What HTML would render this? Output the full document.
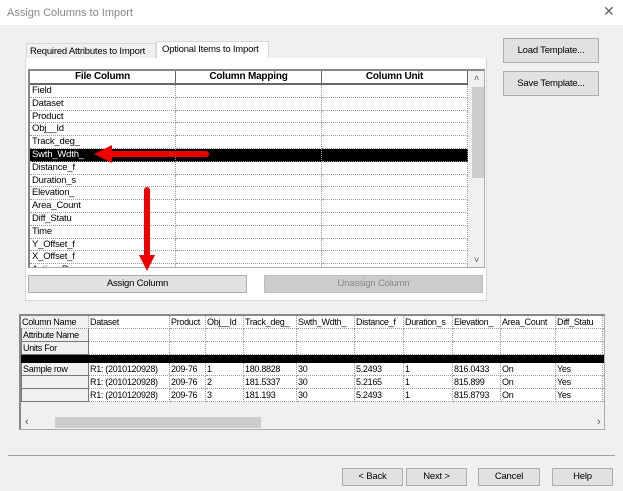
<!DOCTYPE html>
<html><head><meta charset="utf-8"><style>
*{box-sizing:border-box;margin:0;padding:0}
body{width:623px;height:491px;background:#f0f0f0;font-family:"Liberation Sans",Arial,sans-serif;font-size:9.5px;letter-spacing:-0.2px;color:#000;position:relative;overflow:hidden}
.a{position:absolute}
.btn{position:absolute;background:#e1e1e1;border:1px solid #adadad;text-align:center;font-size:9.5px}
.cell{position:absolute;border-right:1px dotted #999;border-bottom:1px dotted #999;white-space:nowrap;overflow:hidden;padding-left:2px;line-height:12px}
</style></head><body>
<div class="a" style="left:0;top:0;width:623px;height:25px;background:#fff"></div>
<div class="a" style="left:7px;top:7px;font-size:11px;color:#888;letter-spacing:0">Assign Columns to Import</div>
<div class="a" style="left:603px;top:3px;font-size:14px;color:#666">✕</div>

<div class="a" style="left:26px;top:43px;width:130px;height:15px;background:#f0f0f0;border:1px solid #d9d9d9;border-bottom:none;padding:2px 3px;white-space:nowrap">Required Attributes to Import</div>
<div class="a" style="left:156px;top:41px;width:113px;height:18px;background:#fff;border:1px solid #d9d9d9;border-bottom:none;padding:2px 5px;white-space:nowrap">Optional Items to Import</div>
<div class="a" style="left:25px;top:58px;width:462px;height:243px;background:#fff;border:1px solid #d9d9d9;border-top:none"></div>

<div class="a" style="left:28px;top:69px;width:457px;height:199px;background:#fff;border:1px solid #aaa;border-top:2px solid #888;border-left:2px solid #888;overflow:hidden">
 <div class="a" style="left:0;top:0;width:438px;height:14px;border-bottom:2px solid #666;font-weight:bold;font-size:10px">
  <div class="a" style="left:0;width:146px;text-align:center;border-right:1px solid #666;height:14px">File Column</div>
  <div class="a" style="left:146px;width:146px;text-align:center;border-right:1px solid #666;height:14px">Column Mapping</div>
  <div class="a" style="left:292px;width:146px;text-align:center;border-right:1px solid #666;height:14px">Column Unit</div>
 </div>
 <div id="rows"></div>
 <div class="a" style="left:438px;top:0;width:19px;height:199px;background:#f0f0f0"></div>
 <div class="a" style="left:444px;top:2px;font-size:9px;color:#555">˄</div>
 <div class="a" style="left:442px;top:16px;width:12px;height:91px;background:#cdcdcd"></div>
 <div class="a" style="left:444px;top:184px;font-size:9px;color:#555">˅</div>
</div>

<div class="btn" style="left:28px;top:275px;width:219px;height:18px;line-height:16px">Assign Column</div>
<div class="btn" style="left:264px;top:275px;width:219px;height:18px;line-height:16px;background:#ccc;border-color:#bfbfbf;color:#888">Unassign Column</div>
<div class="btn" style="left:503px;top:38px;width:96px;height:25px;line-height:23px">Load Template...</div>
<div class="btn" style="left:503px;top:71px;width:96px;height:25px;line-height:23px">Save Template...</div>

<svg class="a" style="left:0;top:0" width="623" height="491">
 <line x1="206" y1="154" x2="108" y2="154" stroke="#e00" stroke-width="6" stroke-linecap="round"/>
 <polygon points="94,154 112,145 112,163" fill="#e00"/>
 <line x1="147" y1="190" x2="147" y2="258" stroke="#e00" stroke-width="6" stroke-linecap="round"/>
 <polygon points="147,271 139,255 155,255" fill="#e00"/>
</svg>

<div class="a" style="left:19px;top:314px;width:586px;height:116px;background:#f0f0f0;border:1px solid #aaa;border-top:2px solid #888;border-left:2px solid #888;overflow:hidden" id="bg"></div>

<div class="a" style="left:8px;top:455px;width:607px;height:1px;background:#a0a0a0"></div>
<div class="btn" style="left:342px;top:468px;width:61px;height:18px;line-height:16px">&lt; Back</div>
<div class="btn" style="left:406px;top:468px;width:61px;height:18px;line-height:16px">Next &gt;</div>
<div class="btn" style="left:478px;top:468px;width:62px;height:18px;line-height:16px">Cancel</div>
<div class="btn" style="left:552px;top:468px;width:61px;height:18px;line-height:16px">Help</div>

<script>
var names=["Field","Dataset","Product","Obj__Id","Track_deg_","Swth_Wdth_","Distance_f","Duration_s","Elevation_","Area_Count","Diff_Statu","Time","Y_Offset_f","X_Offset_f","Active_Row"];
var h="";
names.forEach(function(n,i){var t=14+i*12.8,sel=i==5;
 h+='<div class="a" style="left:0;top:'+t+'px;width:438px;height:12.8px;'+(sel?'background:#000;color:#fff':'')+'">';
 h+='<div class="cell" style="left:0;width:146px;height:12.8px">'+n+'</div><div class="cell" style="left:146px;width:146px;height:12.8px"></div><div class="cell" style="left:292px;width:146px;height:12.8px"></div></div>';});
document.getElementById("rows").innerHTML=h;
var xs=[0,68,149,185,223,276,334,383,432,480,535,582,600];
var hd=["Column Name","Dataset","Product","Obj__Id","Track_deg_","Swth_Wdth_","Distance_f","Duration_s","Elevation_","Area_Count","Diff_Statu","T"];
var r=[["R1: (2010120928)","209-76","1","180.8828","30","5.2493","1","816.0433","On","Yes","-"],["R1: (2010120928)","209-76","2","181.5337","30","5.2165","1","815.899","On","Yes","-"],["R1: (2010120928)","209-76","3","181.193","30","5.2493","1","815.8793","On","Yes","-"]];
var rows=[[0,13,hd,0],[13,13,["Attribute Name"],1],[26,13,["Units For"],1],[39,8,null,2],[47,13,["Sample row"].concat(r[0]),1],[60,13,[""].concat(r[1]),1],[73,13,[""].concat(r[2]),1]];
var b="";
rows.forEach(function(R){
 if(R[3]==2){b+='<div class="a" style="left:0;top:'+R[0]+'px;width:586px;height:8px;background:#000"></div>';return;}
 for(var c=0;c<12;c++){var w=xs[c+1]-xs[c];var tx=R[2][c]||"";
  var bgc=(c==0)?'#f0f0f0':'#fff';var bd=(c==0&&R[3]==1)?'border:1px solid #777;border-top:none':'';
  b+='<div class="cell" style="left:'+xs[c]+'px;top:'+R[0]+'px;width:'+w+'px;height:'+R[1]+'px;background:'+bgc+';font-size:9px;letter-spacing:-0.3px;padding-left:1px;'+bd+'">'+tx+'</div>';}
});
b+='<div class="a" style="left:0;top:99px;width:586px;height:15px;background:#f0f0f0"></div><div class="a" style="left:4px;top:100px;color:#555;font-size:11px">‹</div><div class="a" style="left:576px;top:100px;color:#555;font-size:11px">›</div><div class="a" style="left:34px;top:101px;width:206px;height:11px;background:#cdcdcd"></div>';
document.getElementById("bg").innerHTML=b;
</script>
</body></html>
